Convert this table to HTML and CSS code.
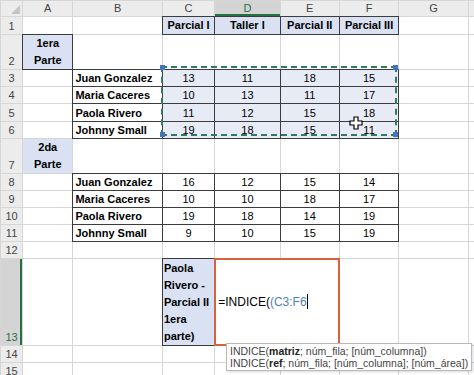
FILE: index.html
```html
<!DOCTYPE html>
<html lang="es">

<head>
    <meta charset="UTF-8">
    <meta name="viewport" content="width=device-width, initial-scale=1.0">
    <title>Notas - INDICE</title>
    <link rel="stylesheet" href="styles.css">
</head>

<body>
    <div class="sheet">
        <table class="grid">
            <colgroup>
                <col class="c-rh">
                <col class="c-a">
                <col class="c-b">
                <col class="c-c">
                <col class="c-d">
                <col class="c-e">
                <col class="c-f">
                <col class="c-g">
                <col class="c-h">
            </colgroup>
            <tr class="hdr">
                <th class="corner"><span class="tri"></span></th>
                <th>A</th>
                <th>B</th>
                <th>C</th>
                <th class="sel-col">D</th>
                <th>E</th>
                <th>F</th>
                <th>G</th>
                <th></th>
            </tr>
            <tr>
                <th class="rh">1</th>
                <td></td>
                <td></td>
                <td class="box head">Parcial I</td>
                <td class="box head">Taller I</td>
                <td class="box head">Parcial II</td>
                <td class="box head">Parcial III</td>
                <td></td>
                <td></td>
            </tr>
            <tr class="tall">
                <th class="rh">2</th>
                <td class="box head">1era<br>Parte</td>
                <td></td>
                <td></td>
                <td></td>
                <td></td>
                <td></td>
                <td></td>
                <td></td>
            </tr>
            <tr>
                <th class="rh">3</th>
                <td></td>
                <td class="box name">Juan Gonzalez</td>
                <td class="box num ref">13</td>
                <td class="box num ref">11</td>
                <td class="box num ref">18</td>
                <td class="box num ref">15</td>
                <td></td>
                <td></td>
            </tr>
            <tr>
                <th class="rh">4</th>
                <td></td>
                <td class="box name">Maria Caceres</td>
                <td class="box num ref">10</td>
                <td class="box num ref">13</td>
                <td class="box num ref">11</td>
                <td class="box num ref">17</td>
                <td></td>
                <td></td>
            </tr>
            <tr class="r17">
                <th class="rh">5</th>
                <td></td>
                <td class="box name">Paola Rivero</td>
                <td class="box num ref">11</td>
                <td class="box num ref">12</td>
                <td class="box num ref">15</td>
                <td class="box num ref">18</td>
                <td></td>
                <td></td>
            </tr>
            <tr>
                <th class="rh">6</th>
                <td></td>
                <td class="box name">Johnny Small</td>
                <td class="box num ref">19</td>
                <td class="box num ref">18</td>
                <td class="box num ref">15</td>
                <td class="box num ref">11</td>
                <td></td>
                <td></td>
            </tr>
            <tr class="tall7">
                <th class="rh">7</th>
                <td class="head">2da<br>Parte</td>
                <td></td>
                <td></td>
                <td></td>
                <td></td>
                <td></td>
                <td></td>
                <td></td>
            </tr>
            <tr>
                <th class="rh">8</th>
                <td></td>
                <td class="box name">Juan Gonzalez</td>
                <td class="box num">16</td>
                <td class="box num">12</td>
                <td class="box num">15</td>
                <td class="box num">14</td>
                <td></td>
                <td></td>
            </tr>
            <tr>
                <th class="rh">9</th>
                <td></td>
                <td class="box name">Maria Caceres</td>
                <td class="box num">10</td>
                <td class="box num">10</td>
                <td class="box num">18</td>
                <td class="box num">17</td>
                <td></td>
                <td></td>
            </tr>
            <tr>
                <th class="rh">10</th>
                <td></td>
                <td class="box name">Paola Rivero</td>
                <td class="box num">19</td>
                <td class="box num">18</td>
                <td class="box num">14</td>
                <td class="box num">19</td>
                <td></td>
                <td></td>
            </tr>
            <tr>
                <th class="rh">11</th>
                <td></td>
                <td class="box name">Johnny Small</td>
                <td class="box num">9</td>
                <td class="box num">10</td>
                <td class="box num">15</td>
                <td class="box num">19</td>
                <td></td>
                <td></td>
            </tr>
            <tr>
                <th class="rh">12</th>
                <td></td>
                <td></td>
                <td></td>
                <td></td>
                <td></td>
                <td></td>
                <td></td>
                <td></td>
            </tr>
            <tr class="big">
                <th class="rh sel-row">13</th>
                <td></td>
                <td></td>
                <td class="box head wrap">Paola Rivero - Parcial II 1era parte)</td>
                <td class="edit" colspan="2">=INDICE(<span class="blue">(C3:F6</span><span class="caret"></span></td>
                <td></td>
                <td></td>
                <td></td>
            </tr>
            <tr>
                <th class="rh">14</th>
                <td></td>
                <td></td>
                <td></td>
                <td></td>
                <td></td>
                <td></td>
                <td></td>
                <td></td>
            </tr>
            <tr>
                <th class="rh">15</th>
                <td></td>
                <td></td>
                <td></td>
                <td></td>
                <td></td>
                <td></td>
                <td></td>
                <td></td>
            </tr>
        </table>

        <!-- copy marquee around C3:F6 -->
        <div class="marquee">
            <span class="handle tl"></span>
            <span class="handle tr"></span>
            <span class="handle bl"></span>
            <span class="handle br"></span>
        </div>

        <!-- mouse pointer -->
        <svg class="pointer" width="14" height="14" viewBox="0 0 14 14">
            <path d="M5 1h4v4h4v4h-4v4h-4v-4h-4v-4h4z" fill="#fff" stroke="#000" stroke-width="1.2" />
        </svg>

        <div class="tip">
            <div>INDICE(<b>matriz</b>; núm_fila; [núm_columna])</div>
            <div>INDICE(<b>ref</b>; núm_fila; [núm_columna]; [núm_área])</div>
        </div>
    </div>
</body>

</html>
```

FILE: styles.css
```css
body {
    margin: 0;
    background: #fff;
    overflow: hidden;
    font-family: "Liberation Sans", Arial, sans-serif;
    font-size: 11px;
    color: #000;
}

.sheet {
    position: relative;
    width: 474px;
    height: 375px;
    overflow: hidden;
}

.grid {
    table-layout: fixed;
    border-collapse: separate;
    border-spacing: 1px;
    background: #d6d6d6;
    width: 520px;
}

.c-rh { width: 21px; }
.c-a { width: 49px; }
.c-b { width: 88px; }
.c-c { width: 51px; }
.c-d { width: 64px; }
.c-e { width: 58px; }
.c-f { width: 58px; }
.c-g { width: 68px; }
.c-h { width: 50px; }

td,
th {
    height: 16px;
    padding: 0 2px;
    background: #fff;
    line-height: 15px;
    vertical-align: bottom;
    white-space: nowrap;
    overflow: visible;
}

tr.hdr th {
    height: 15px;
    background: #ececec;
    color: #444;
    font-weight: normal;
    text-align: center;
    vertical-align: middle;
}

th.rh {
    background: #ececec;
    color: #444;
    font-weight: normal;
    text-align: center;
    padding: 0;
}

tr.tall td,
tr.tall th {
    height: 33px;
}

tr.tall7 td,
tr.tall7 th {
    height: 34px;
}

tr.r17 td,
tr.r17 th {
    height: 17px;
}

tr.big td,
tr.big th {
    height: 86px;
}

.corner {
    position: relative;
}

.tri {
    position: absolute;
    right: 2px;
    bottom: 2px;
    width: 0;
    height: 0;
    border-left: 9px solid transparent;
    border-bottom: 9px solid #c4c4c4;
}

th.sel-col {
    background: #d4d4d4 !important;
    color: #2b6e4b !important;
    box-shadow: inset 0 -2px 0 #217346;
}

th.sel-row {
    background: #d4d4d4;
    color: #2b6e4b;
    box-shadow: inset -2px 0 0 #217346;
}

/* cell formats */
.box {
    outline: 1px solid #3c3c3c;
}

.head {
    background: #d9e1f2;
    font-weight: bold;
    text-align: center;
    line-height: 17px;
}

.name {
    font-weight: bold;
    text-align: left;
}

.num {
    text-align: center;
}

.ref {
    background: #e6ebf5;
}

.wrap {
    white-space: normal;
    text-align: left;
    line-height: 17px;
    padding: 0 1px;
}

.edit {
    outline: 2px solid #d9623c;
    outline-offset: -1px;
    vertical-align: middle;
    padding-left: 3px;
    font-size: 12px;
}

.blue {
    color: #4f81bd;
}

.caret {
    display: inline-block;
    width: 1px;
    height: 15px;
    background: #000;
    vertical-align: -3px;
}

.marquee {
    position: absolute;
    left: 161px;
    top: 66px;
    width: 232px;
    height: 66px;
    border: 2px dashed #2f7a60;
}

.handle {
    position: absolute;
    width: 5px;
    height: 5px;
    background: #4472c4;
}

.handle.tl { left: -3px; top: -3px; }
.handle.tr { right: -3px; top: -3px; }
.handle.bl { left: -3px; bottom: -3px; }
.handle.br { right: -3px; bottom: -3px; }

.pointer {
    position: absolute;
    left: 349px;
    top: 116px;
}

.tip {
    position: absolute;
    left: 226px;
    top: 343px;
    padding: 1px 3px;
    background: #fff;
    border: 1px solid #b9b9b9;
    box-shadow: 1px 1px 2px rgba(0, 0, 0, 0.15);
    color: #444;
    font-size: 10.5px;
    line-height: 12px;
    white-space: nowrap;
}

.tip b {
    color: #222;
}
```
